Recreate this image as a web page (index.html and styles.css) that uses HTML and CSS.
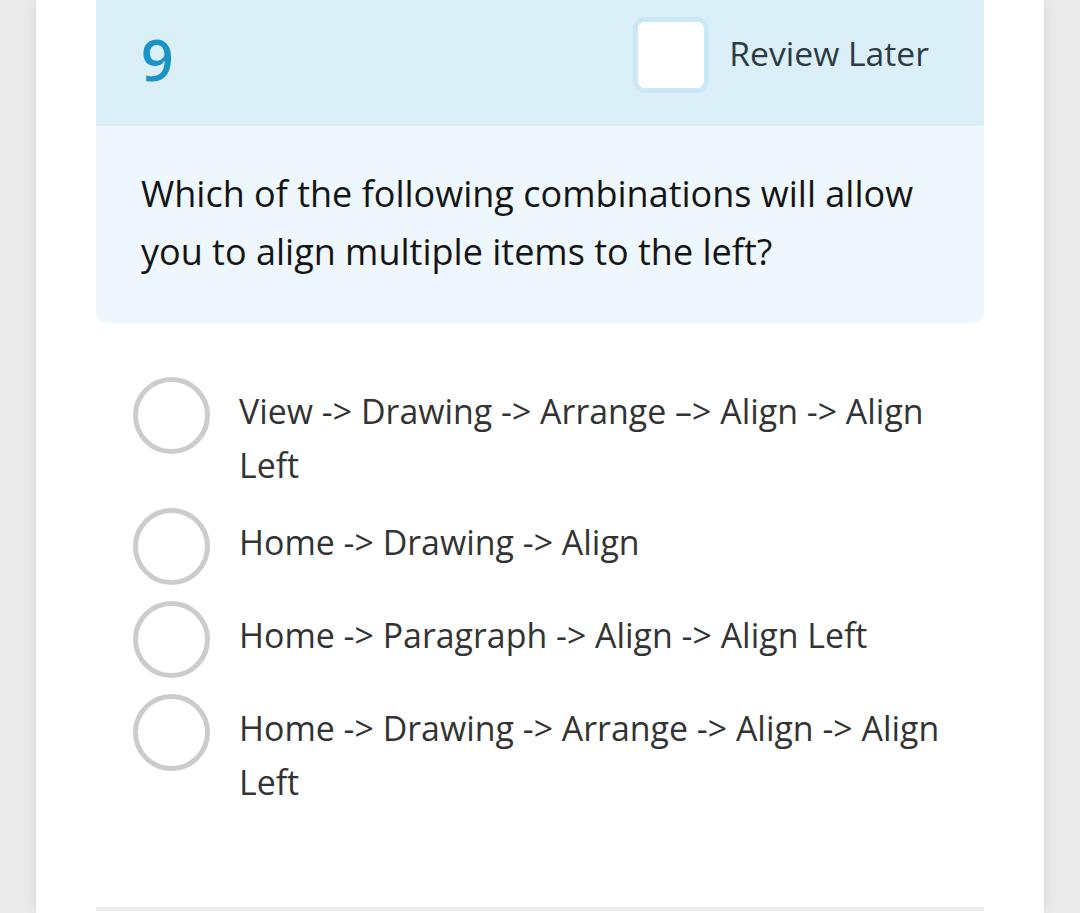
FILE: index.html
```html
<!DOCTYPE html>
<html lang="en">
<head>
<meta charset="utf-8">
<title>Question 9</title>
<link rel="stylesheet" href="styles.css">
</head>
<body>
<div class="page">
  <div class="card">
    <div class="question">
      <div class="q-head">
        <div class="q-num">9</div>
        <label class="review">
          <span class="checkbox"><span class="checkbox-inner"></span></span>
          <span class="review-text">Review Later</span>
        </label>
      </div>
      <div class="q-body">
        <p class="q-text">Which of the following combinations will allow you to align multiple items to the left?</p>
      </div>
    </div>
    <ul class="options">
      <li class="option"><span class="radio"></span><span class="opt-text">View -&gt; Drawing -&gt; Arrange –&gt; Align -&gt; Align Left</span></li>
      <li class="option"><span class="radio"></span><span class="opt-text">Home -&gt; Drawing -&gt; Align</span></li>
      <li class="option"><span class="radio"></span><span class="opt-text">Home -&gt; Paragraph -&gt; Align -&gt; Align Left</span></li>
      <li class="option"><span class="radio"></span><span class="opt-text">Home -&gt; Drawing -&gt; Arrange -&gt; Align -&gt; Align Left</span></li>
    </ul>
    <div class="divider"></div>
  </div>
</div>
</body>
</html>
```

FILE: styles.css
```css
* { box-sizing: border-box; }
html, body {
  margin: 0;
  padding: 0;
  height: 100%;
  background: #ebebeb;
  font-family: "Open Sans", "Noto Sans", sans-serif;
  overflow: hidden;
}
.page {
  padding: 0 36px;
  height: 913px;
}
.card {
  background: #ffffff;
  height: 913px;
  padding: 0 60px;
  box-shadow: 0 0 14px rgba(0, 0, 0, 0.09);
}
.question {
  border-radius: 0 0 12px 12px;
  overflow: hidden;
}
.q-head {
  background: #dbeff9;
  height: 126px;
  display: flex;
  align-items: flex-start;
  padding: 17px 55px 0 45px;
}
.q-num {
  font-size: 57px;
  font-weight: 600;
  color: #1a93c6;
  line-height: 1;
  margin-top: 14px;
  flex: 1;
}
.review {
  display: flex;
  align-items: center;
  gap: 20px;
}
.checkbox {
  width: 76px;
  height: 76px;
  border: 5px solid #cbe8f5;
  border-radius: 12px;
  display: flex;
  background: #ffffff;
}
.checkbox-inner {
  flex: 1;
  border-radius: 8px;
  background: #ffffff;
}
.review-text {
  font-size: 33.7px;
  color: #2e3b42;
  margin-top: -5px;
}
.q-body {
  background: #eef7fd;
  padding: 39px 45px 42px;
}
.q-text {
  margin: 0;
  font-size: 36px;
  line-height: 58px;
  color: #151515;
}
.options {
  list-style: none;
  margin: 54px 0 0;
  padding: 0 0 0 37px;
  display: flex;
  flex-direction: column;
  gap: 16px;
}
.option {
  display: flex;
  align-items: flex-start;
  gap: 29px;
}
.radio {
  flex: none;
  width: 77px;
  height: 77px;
  border: 5px solid #cccccc;
  border-radius: 50%;
  background: #ffffff;
}
.opt-text {
  padding-top: 7px;
  font-size: 33.9px;
  line-height: 54px;
  color: #333333;
}
.divider {
  margin-top: 98px;
  height: 4px;
  background: #ececec;
}
```
